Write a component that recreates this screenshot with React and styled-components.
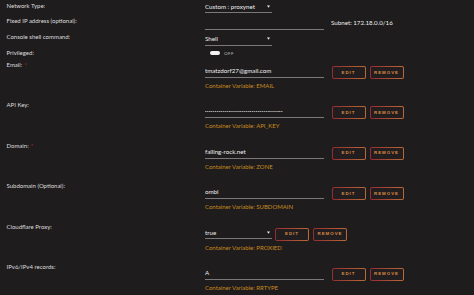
import styled, { createGlobalStyle } from 'styled-components';

const GlobalStyle = createGlobalStyle`
    html, body {
        margin: 0;
        padding: 0;
        background: #1e1c1d;
    }
    body {
        font-family: Lato, 'Liberation Sans', Arial, sans-serif;
    }
`;

const Page = styled.div`
    width: 474px;
    height: 295px;
    overflow: hidden;
    padding-left: 6.5px;
    box-sizing: border-box;
    background: #1e1c1d;
    color: #d9d9d9;
    font-size: 6px;
`;

const Row = styled.div`
    display: grid;
    grid-template-columns: 198.5px 1fr;
    height: ${(p) => p.$h}px;
`;

const Label = styled.div`
    line-height: 10px;
    padding-top: ${(p) => p.$pt || 0}px;
    color: #dedede;
    white-space: nowrap;
`;

const Required = styled.span`
    color: #c8323a;
    margin-left: 2px;
`;

const FieldLine = styled.div`
    display: flex;
    align-items: flex-start;
    margin-top: ${(p) => p.$mt || 0}px;
`;

const TextInput = styled.div`
    width: ${(p) => p.$w || 119}px;
    height: ${(p) => p.$h || 12}px;
    box-sizing: border-box;
    border-bottom: 1.5px solid #7a7879;
    line-height: ${(p) => (p.$h || 12) - 1.5}px;
    color: #efefef;
    font-size: 6.2px;
    white-space: nowrap;
    overflow: hidden;
`;

const Dots = styled.span`
    font-family: 'Liberation Sans', Arial, sans-serif;
    font-size: 4px;
    letter-spacing: 0.55px;
    position: relative;
    top: -0.5px;
`;

const Select = styled(TextInput)`
    width: 67px;
    display: flex;
    justify-content: space-between;
    align-items: center;
    line-height: normal;
    padding-right: 2px;
`;

const Caret = styled.svg`
    width: 3px;
    height: 3px;
    display: block;
`;

const Note = styled.div`
    color: #ececec;
    line-height: 14px;
    margin-left: 7px;
    font-size: 6.2px;
`;

const ToggleWrap = styled.div`
    display: flex;
    align-items: center;
    gap: 4px;
    padding-left: 5px;
    height: 10px;
`;

const Toggle = styled.div`
    width: 10px;
    height: 4.5px;
    border-radius: 2px;
    background: #f2f2f2;
`;

const Off = styled.span`
    font-size: 4.6px;
    color: #bdbdbd;
    letter-spacing: 0.3px;
`;

const Buttons = styled.div`
    display: flex;
    gap: 4px;
    margin-left: ${(p) => p.$ml}px;
`;

const Button = styled.button`
    width: 34px;
    height: 13px;
    padding: 0;
    box-sizing: border-box;
    border: 1.5px solid transparent;
    border-radius: 2px;
    background: linear-gradient(#221e1f, #221e1f) padding-box,
        linear-gradient(90deg, #962b31, #b86a36) border-box;
    color: #dc8c45;
    font-family: 'Liberation Sans', Arial, sans-serif;
    font-weight: bold;
    font-size: 4.4px;
    letter-spacing: 1px;
    line-height: 10px;
    text-align: center;
`;

const EnvRow = styled.div`
    display: grid;
    grid-template-columns: 198.5px 1fr;
    height: 40.4px;
`;

const Field = styled.div`
    display: flex;
    flex-direction: column;
`;

const VarName = styled.div`
    color: #c98b20;
    line-height: 8px;
    margin-top: 3px;
`;

const envVars = [
    { label: 'Email:', required: true, value: 'tmatzdorf27@gmail.com', name: 'EMAIL' },
    { label: 'API Key:', value: 'secret', password: true, name: 'API_KEY' },
    { label: 'Domain:', required: true, value: 'falling-rock.net', name: 'ZONE' },
    { label: 'Subdomain (Optional):', value: 'ombi', name: 'SUBDOMAIN' },
    { label: 'Cloudflare Proxy:', value: 'true', select: true, name: 'PROXIED' },
    { label: 'IPv6/IPv4 records:', value: 'A', name: 'RRTYPE' },
];

const CaretIcon = () => (
    <Caret viewBox='0 0 3 3'>
        <path d='M0 0.5 H3 L1.5 2.8 Z' fill='#eeeeee' />
    </Caret>
);

const App = () => {
    return (
        <Page>
            <GlobalStyle />
            <Row $h={16}>
                <Label $pt={1}>Network Type:</Label>
                <FieldLine>
                    <Select $h={13}>
                        <span>Custom : proxynet</span>
                        <CaretIcon />
                    </Select>
                </FieldLine>
            </Row>
            <Row $h={16}>
                <Label>Fixed IP address (optional):</Label>
                <FieldLine>
                    <TextInput $h={13.5} />
                    <Note>Subnet: 172.18.0.0/16</Note>
                </FieldLine>
            </Row>
            <Row $h={16}>
                <Label>Console shell command:</Label>
                <FieldLine $mt={1}>
                    <Select $h={12.5}>
                        <span>Shell</span>
                        <CaretIcon />
                    </Select>
                </FieldLine>
            </Row>
            <Row $h={12}>
                <Label>Privileged:</Label>
                <ToggleWrap>
                    <Toggle />
                    <Off>OFF</Off>
                </ToggleWrap>
            </Row>

            {envVars.map((v) => (
                <EnvRow key={v.name}>
                    <Label>
                        {v.label}
                        {v.required && <Required>*</Required>}
                    </Label>
                    <Field>
                        <FieldLine $mt={6}>
                            {v.select ? (
                                <Select $h={11.5}>
                                    <span>{v.value}</span>
                                    <CaretIcon />
                                </Select>
                            ) : (
                                <TextInput>
                                    {v.password ? <Dots>{'•'.repeat(40)}</Dots> : v.value}
                                </TextInput>
                            )}
                            <Buttons $ml={v.select ? 3 : 7.5}>
                                <Button>EDIT</Button>
                                <Button>REMOVE</Button>
                            </Buttons>
                        </FieldLine>
                        <VarName>Container Variable: {v.name}</VarName>
                    </Field>
                </EnvRow>
            ))}
        </Page>
    );
};

export default App;
